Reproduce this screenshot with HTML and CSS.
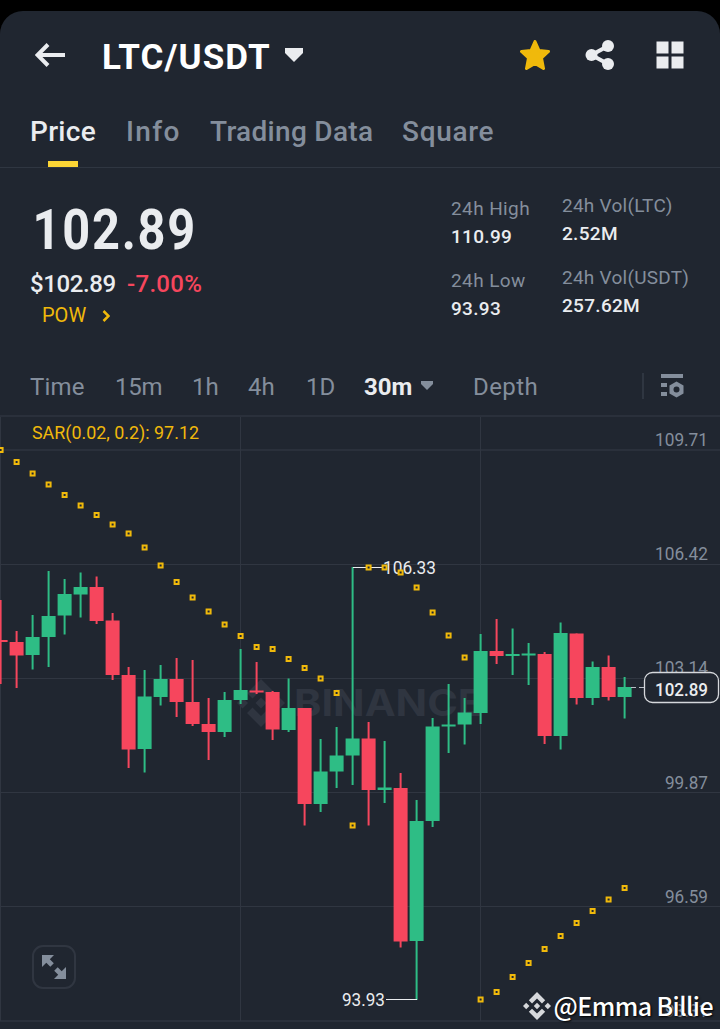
FILE: index.html
```html
<!DOCTYPE html>
<html lang="en">
<head>
<meta charset="UTF-8">
<meta name="viewport" content="width=device-width, initial-scale=1.0">
<title>LTC/USDT</title>
<link rel="stylesheet" href="styles.css">
</head>
<body>

<div class="app">
    <header class="header">
        <svg class="back" width="30" height="24" viewBox="0 0 30 24"><path d="M2 12H30M13 1.5L2.500 12L13 22.500" /></svg>
        <h1 class="pair">LTC/USDT</h1>
        <svg class="pair-arrow" width="18" height="14" viewBox="0 0 18 14"><path d="M0 0H18V5L9 14L0 5Z" /></svg>
        <div class="actions">
            <svg class="star" width="30" height="30" viewBox="0 0 30 30"><path d="M15 1.500L19 10.500L28.500 11.500L21.500 18L23.500 28.500L15 23.500L6.500 28.500L8.500 18L1.500 11.500L11 10.500Z" /></svg>
            <svg class="share" width="30" height="30" viewBox="0 0 30 30">
                <path d="M23 6L6.500 15L23 24" />
                <circle cx="23" cy="6" r="6" /><circle cx="6.500" cy="15" r="6" /><circle cx="23" cy="24" r="6" />
            </svg>
            <svg class="grid-icon" width="28" height="28" viewBox="0 0 28 28"><path d="M.5.5h12v12H.5zM15.500.5h12v12h-12zM.5 15.500h12v12H.5zM15.500 15.500h12v12h-12z" /></svg>
        </div>
    </header>

    <nav class="tabs">
        <a class="tab tab-price active">Price</a>
        <a class="tab tab-info">Info</a>
        <a class="tab tab-data">Trading Data</a>
        <a class="tab tab-square">Square</a>
    </nav>

    <section class="ticker">
        <div class="quote">
            <div class="last-price">102.89</div>
            <div class="change-row">
                <span class="usd">$102.89</span>
                <span class="change">-7.00%</span>
            </div>
            <div class="tag">POW <svg width="8" height="12" viewBox="0 0 8 12"><path d="M1.500 1L6.500 6L1.500 11" /></svg></div>
        </div>
        <div class="stats stats-price">
            <div class="stat"><span class="label">24h High</span><span class="value">110.99</span></div>
            <div class="stat"><span class="label">24h Low</span><span class="value">93.93</span></div>
        </div>
        <div class="stats stats-vol">
            <div class="stat"><span class="label">24h Vol(LTC)</span><span class="value">2.52M</span></div>
            <div class="stat"><span class="label">24h Vol(USDT)</span><span class="value">257.62M</span></div>
        </div>
    </section>

    <div class="intervals">
        <span class="w-time">Time</span>
        <span class="w-15m">15m</span>
        <span class="w-1h">1h</span>
        <span class="w-4h">4h</span>
        <span class="w-1d">1D</span>
        <span class="w-30m selected">30m <svg width="12" height="9" viewBox="0 0 12 9"><path d="M0 0H12V3L6 9L0 3Z" /></svg></span>
        <span class="w-depth">Depth</span>
        <svg class="settings" width="24" height="26" viewBox="0 0 24 26">
            <path d="M1 1h22v4H1zM1 10h6v4H1zM1 19h6v4H1z" />
            <path fill-rule="evenodd" d="M16.500 8.500L23.500 12.500V20.500L16.500 24.500L9.500 20.500V12.500ZM16.500 13.500A3 3 0 1 0 16.500 19.500A3 3 0 1 0 16.500 13.500Z" />
        </svg>
    </div>

    <div class="chart">
        <svg class="plot" width="720" height="614" viewBox="0 415 720 614">
            <defs>
                <g id="logo">
                    <path d="M0-24L14-10L8.500-4.500L0-13L-8.500-4.500L-14-10Z" />
                    <path d="M0 24L14 10L8.500 4.500L0 13L-8.500 4.500L-14 10Z" />
                    <path d="M0-5.500L5.500 0L0 5.500L-5.500 0Z" />
                    <path d="M-18.500-5.500L-13 0L-18.500 5.500L-24 0Z" />
                    <path d="M18.500-5.500L24 0L18.500 5.500L13 0Z" />
                </g>
            </defs>
            <g class="grid">
                <path class="thick" d="M0 416H720M0 450H720M0 1021H720" />
                <path d="M0 564.500H720M0 678.500H720M0 792.500H720M0 906.500H720M.5 417V1021M240.500 417V1021M480.500 417V1021" />
            </g>
            <g class="watermark">
                <use href="#logo" x="261" y="703" />
                <text x="294" y="716" textLength="189" lengthAdjust="spacingAndGlyphs">BINANCE</text>
            </g>
            <g id="candles"></g>
            <path class="callout" d="M353 567.500H383M386 999.500H417" />
            <text class="extreme" x="383" y="574" textLength="53" lengthAdjust="spacingAndGlyphs">106.33</text>
            <text class="extreme" x="342" y="1006" textLength="43" lengthAdjust="spacingAndGlyphs">93.93</text>
            <g id="sar"></g>
            <text class="sar-label" x="32" y="439" textLength="167" lengthAdjust="spacingAndGlyphs">SAR(0.02, 0.2): 97.12</text>
            <g class="axis">
                <text x="655" y="446" textLength="53" lengthAdjust="spacingAndGlyphs">109.71</text>
                <text x="655" y="560" textLength="53" lengthAdjust="spacingAndGlyphs">106.42</text>
                <text x="655" y="674" textLength="53" lengthAdjust="spacingAndGlyphs">103.14</text>
                <text x="665" y="789" textLength="43" lengthAdjust="spacingAndGlyphs">99.87</text>
                <text x="665" y="903" textLength="43" lengthAdjust="spacingAndGlyphs">96.59</text>
                <text x="665" y="1017" textLength="43" lengthAdjust="spacingAndGlyphs">93.31</text>
            </g>
            <path class="last-line" d="M631 687.500H644" />
            <rect class="last-box" x="644.500" y="672.500" width="74" height="30" rx="8" />
            <text class="last-text" x="655" y="696" textLength="53" lengthAdjust="spacingAndGlyphs">102.89</text>
            <g class="expand">
                <rect x="33" y="946" width="42" height="42" rx="10" />
                <path d="M42 955h12l-4.200 4.200l4 4l-3.500 3.500l-4-4L42 967zM66 979h-12l4.200-4.200l-4-4l3.500-3.500l4 4L66 967z" />
            </g>
        </svg>
        <div class="author">
            <svg width="28" height="28" viewBox="-24 -24 48 48"><use href="#logo" /></svg>
            <span>@Emma Billie</span>
        </div>
    </div>
</div>

<script src="chart.js"></script>
</body>
</html>
```
FILE: styles.css
```css
body {
    margin: 0;
    background: #000;
    font-family: Roboto, "Noto Sans", sans-serif;
    color: #eaecef;
}

.app {
    width: 720px;
    height: 1018px;
    margin-top: 11px;
    border-radius: 23px 23px 0 0;
    background: #202630;
    overflow: hidden;
    display: flex;
    flex-direction: column;
}

/* header */
.header {
    height: 88px;
    padding: 0 36px 0 35px;
    display: flex;
    align-items: center;
    flex: none;
}

.back {
    fill: none;
    stroke: #eaecef;
    stroke-width: 4;
}

.pair {
    width: 168px;
    margin: 5px 0 0 37px;
    font-size: 35px;
    line-height: 40px;
    font-weight: 700;
    letter-spacing: 1.1px;
    color: #fff;
}

.pair-arrow {
    margin-left: 15px;
    fill: #eaecef;
}

.actions {
    margin-left: auto;
    display: flex;
    align-items: center;
}

.star {
    fill: #f0b90b;
    stroke: #f0b90b;
    stroke-width: 3;
    stroke-linejoin: round;
}

.share {
    margin: 0 41px 0 35px;
    fill: #eaecef;
}

.share path {
    fill: none;
    stroke: #eaecef;
    stroke-width: 4;
}

.grid-icon {
    fill: #eaecef;
}

/* tabs */
.tabs {
    height: 68px;
    padding-left: 30px;
    display: flex;
    flex: none;
    border-bottom: 1px solid #2f3641;
    font-size: 28px;
    font-weight: 500;
    line-height: 66px;
    letter-spacing: 0.3px;
    color: #848e9c;
}

.tab {
    white-space: nowrap;
}

.tab-price {
    width: 66px;
    margin-right: 30px;
}

.tab-info {
    width: 54px;
    margin-right: 30px;
    letter-spacing: 1.4px;
}

.tab-data {
    width: 162px;
    margin-right: 30px;
}

.tab-square {
    letter-spacing: 0.7px;
}

.tab.active {
    color: #eaecef;
    background: linear-gradient(#fcd535, #fcd535) 18px 100% / 30px 6px no-repeat;
}

/* price block */
.ticker {
    height: 188px;
    display: flex;
    flex: none;
}

.quote {
    width: 421px;
    padding-left: 30px;
}

.last-price {
    margin-top: 29px;
    padding-left: 3px;
    width: 200px;
    height: 68px;
    font-size: 56px;
    line-height: 66px;
    font-weight: 700;
    letter-spacing: 2px;
    transform: scaleX(0.87);
    transform-origin: 0 0;
}

.change-row {
    display: flex;
    height: 38px;
    font-size: 24px;
    line-height: 38px;
    font-weight: 500;
}

.usd {
    width: 97px;
    letter-spacing: -0.4px;
}

.change {
    color: #f6465d;
    letter-spacing: 0.3px;
}

.tag {
    padding-left: 12px;
    font-size: 20px;
    line-height: 24px;
    color: #f0b90b;
}

.tag svg {
    margin-left: 11px;
    fill: none;
    stroke: #f0b90b;
    stroke-width: 2.5;
}

.stats {
    display: flex;
    flex-direction: column;
    gap: 16px;
}

.stats-price {
    width: 111px;
    padding-top: 27px;
}

.stats-vol {
    padding-top: 24px;
}

.stat {
    display: flex;
    flex-direction: column;
    line-height: 28px;
}

.label {
    font-size: 19px;
    color: #848e9c;
    letter-spacing: 0.4px;
}

.stats-vol .label {
    letter-spacing: 0.25px;
}

.value {
    font-size: 19px;
    font-weight: 500;
    letter-spacing: 0.3px;
}

/* interval row */
.intervals {
    height: 59px;
    padding-left: 30px;
    display: flex;
    flex: none;
    font-size: 24px;
    line-height: 62px;
    color: #848e9c;
}

.w-time {
    width: 85px;
    letter-spacing: 0.2px;
}

.w-15m {
    width: 77px;
    letter-spacing: -0.3px;
}

.w-1h { width: 56px; }
.w-4h { width: 58px; }
.w-1d { width: 58px; }
.w-30m { width: 109px; }

.w-depth {
    width: 169px;
    letter-spacing: 0.4px;
}

.intervals .selected {
    color: #eaecef;
    font-weight: 700;
}

.selected svg {
    margin-left: 3px;
    margin-bottom: 5px;
    fill: #848e9c;
}

.settings {
    align-self: center;
    padding-left: 16px;
    border-left: 2px solid #2f3641;
    fill: #848e9c;
}

/* chart */
.chart {
    position: relative;
    height: 614px;
    flex: none;
}

.plot {
    display: block;
}

.grid path {
    fill: none;
    stroke: #303641;
    stroke-width: 1;
}

.grid .thick {
    stroke: #2a303b;
    stroke-width: 2;
}

.watermark {
    fill: #2f3540;
    font-weight: 700;
    font-family: Inter, sans-serif;
}

.up {
    fill: #2ebd85;
    stroke: #2ebd85;
}

.down {
    fill: #f6465d;
    stroke: #f6465d;
}

.up path, .down path {
    stroke-width: 2;
}

.up rect, .down rect {
    stroke: none;
}

.sar-dot {
    fill: #202630;
    stroke: #f0b90b;
    stroke-width: 2;
}

.callout {
    stroke: #eaecef;
    stroke-width: 1;
}

.plot text {
    font-size: 18px;
}

.plot .watermark text {
    font-size: 37px;
}

.extreme, .last-text {
    fill: #eaecef;
}

.last-text {
    font-weight: 500;
}

.sar-label {
    fill: #f0b90b;
}

.axis {
    fill: #848e9c;
}

.last-line {
    stroke: #b7bdc6;
    stroke-dasharray: 5 3;
}

.last-box {
    fill: #202630;
    stroke: #d5d8dc;
    stroke-width: 1.3;
}

.expand rect {
    fill: #202630;
    stroke: #303641;
    stroke-width: 2;
}

.expand path {
    fill: #848e9c;
}

.author {
    position: absolute;
    right: 7px;
    bottom: 5px;
    display: flex;
    align-items: center;
    gap: 3px;
    font-family: "Noto Sans CJK SC", sans-serif;
    font-size: 25px;
    line-height: 38px;
    font-weight: 500;
    letter-spacing: -0.6px;
    color: #fff;
    text-shadow: 1px 1px 2px #000;
}

.author span {
    margin-top: -2px;
}

.author svg {
    fill: #d6d8db;
}
```
FILE: chart.js
```js
const STEP = 16;
const NS = 'http://www.w3.org/2000/svg';

// [direction, high, body top, body bottom, low]
const candles = [
    ['down', 600, 640, 642, 684],
    ['down', 631, 642, 655.5, 688],
    ['up', 615, 637, 655, 669.5],
    ['up', 571, 616, 637, 667],
    ['up', 579, 594, 615.5, 634.5],
    ['up', 572.5, 587, 594.5, 617.5],
    ['down', 576.5, 587, 621, 624],
    ['down', 613, 620.5, 675, 680],
    ['down', 667, 675, 749.5, 768],
    ['up', 670, 696.5, 749, 772.5],
    ['up', 665, 679, 697, 705.5],
    ['down', 658, 679, 702, 717],
    ['down', 660, 702, 724, 726],
    ['down', 698, 724, 732, 760],
    ['up', 692, 700, 732, 737],
    ['up', 649, 690, 700, 704],
    ['down', 662, 690.5, 692.5, 694],
    ['down', 691, 692, 729.5, 740],
    ['up', 678.5, 708, 730, 732],
    ['down', 708, 708, 804, 825.5],
    ['up', 739, 771.5, 804, 812],
    ['up', 727, 755.5, 771.5, 788],
    ['up', 567, 738.5, 755.5, 785],
    ['down', 722, 738.5, 790, 825.5],
    ['up', 741, 787.5, 790, 803],
    ['down', 773, 788, 941.5, 947.5],
    ['up', 800, 821, 941, 1000],
    ['up', 718, 726.5, 821, 827],
    ['up', 684, 724.5, 726.5, 753],
    ['up', 698, 712.5, 724.5, 744.5],
    ['up', 634, 651, 713, 724],
    ['down', 619, 651, 656, 664],
    ['up', 628.5, 654, 656, 675],
    ['up', 643, 653.5, 655.5, 685],
    ['down', 652, 654, 736, 744],
    ['up', 622.5, 633, 736, 749.5],
    ['down', 633.5, 633.5, 698, 704.5],
    ['up', 661.5, 667, 698, 705],
    ['down', 655.5, 667, 697, 700.5],
    ['up', 677, 687, 697, 718.5]
];

const sar = [
    450, 462, 473.5, 484.5, 495, 505.5, 515, 524.5, 533.5, 547.5,
    565.5, 582, 597.5, 611.5, 624.5, 636, 647, 649, 659, 668,
    678.5, 693, 825.5, 567.5, 567.5, 572.5, 587.5, 612.5, 635.5, 657.5,
    999.5, 992, 977, 963, 949, 936, 923, 911, 899.5, 888
];

function add(parent, name, attrs) {
    const el = document.createElementNS(NS, name);
    Object.entries(attrs).forEach(([key, value]) => el.setAttribute(key, value));
    parent.appendChild(el);
    return el;
}

candles.forEach(([direction, high, top, bottom, low], i) => {
    const x = i * STEP + 0.6;
    const group = add(document.getElementById('candles'), 'g', { class: direction });
    add(group, 'path', { d: `M${x} ${high}V${low}` });
    add(group, 'rect', { x: x - 7, y: top, width: 14, height: bottom - top });
});

sar.forEach((y, i) => {
    add(document.getElementById('sar'), 'rect', {
        class: 'sar-dot',
        x: i * STEP - 1.4,
        y: y - 2,
        width: 4,
        height: 4
    });
});
```
